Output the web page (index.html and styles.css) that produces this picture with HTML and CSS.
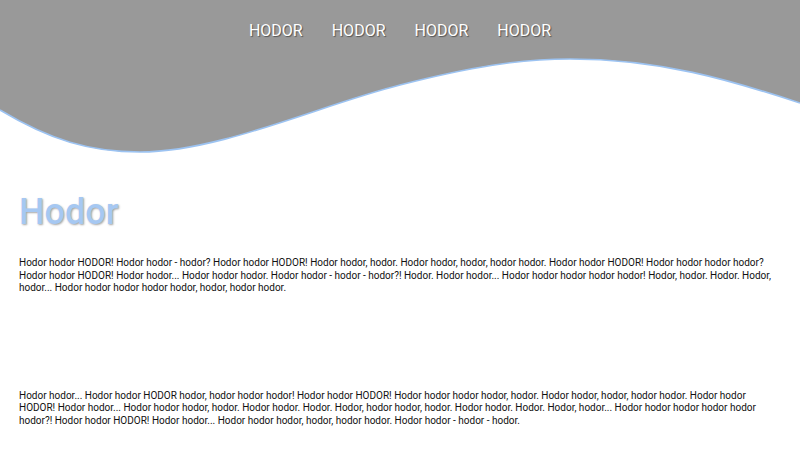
FILE: index.html
```html
<!DOCTYPE html>
<html>
<head>
<meta charset="utf-8">
<link rel="stylesheet" href="styles.css">
</head>
<body>
<header class="hero">
  <svg class="wave" viewBox="0 0 800 160" preserveAspectRatio="none" aria-hidden="true">
    <path d="M0,0 L800,0 L800,103 C730,80 660,59 570,59 C520,59 470,67 400,85 C320,105 220,152 140,152 C90,152 50,140 0,110 Z" fill="#999999"/>
    <path d="M800,103 C730,80 660,59 570,59 C520,59 470,67 400,85 C320,105 220,152 140,152 C90,152 50,140 0,110" fill="none" stroke="#9cc3f2" stroke-width="1.6"/>
  </svg>
  <nav class="nav">
    <a class="nav-link">HODOR</a>
    <a class="nav-link">HODOR</a>
    <a class="nav-link">HODOR</a>
    <a class="nav-link">HODOR</a>
  </nav>
</header>
<main class="content">
  <h1 class="title">Hodor</h1>
  <p class="text">Hodor hodor HODOR! Hodor hodor - hodor? Hodor hodor HODOR! Hodor hodor, hodor. Hodor hodor, hodor, hodor hodor. Hodor hodor HODOR! Hodor hodor hodor hodor? Hodor hodor HODOR! Hodor hodor... Hodor hodor hodor. Hodor hodor - hodor - hodor?! Hodor. Hodor hodor... Hodor hodor hodor hodor hodor! Hodor, hodor. Hodor. Hodor, hodor... Hodor hodor hodor hodor hodor, hodor, hodor hodor.</p>
  <p class="text text-second">Hodor hodor... Hodor hodor HODOR hodor, hodor hodor hodor! Hodor hodor HODOR! Hodor hodor hodor hodor, hodor. Hodor hodor, hodor, hodor hodor. Hodor hodor HODOR! Hodor hodor... Hodor hodor hodor, hodor. Hodor hodor. Hodor. Hodor, hodor hodor, hodor. Hodor hodor. Hodor. Hodor, hodor... Hodor hodor hodor hodor hodor hodor?! Hodor hodor HODOR! Hodor hodor... Hodor hodor hodor, hodor, hodor hodor. Hodor hodor - hodor - hodor.</p>
</main>
</body>
</html>
```
FILE: styles.css
```css
html, body {
  margin: 0;
  padding: 0;
  background: #ffffff;
}
body {
  font-family: Roboto, "Liberation Sans", sans-serif;
  color: #111;
}
.hero {
  position: relative;
  height: 160px;
}
.wave {
  position: absolute;
  left: 0;
  top: 0;
  width: 800px;
  height: 160px;
  display: block;
}
.nav {
  position: relative;
  display: flex;
  justify-content: center;
  gap: 29px;
  padding-top: 21px;
}
.nav-link {
  color: #ffffff;
  font-size: 16px;
  text-shadow: 1px 1px 1px rgba(0,0,0,0.45);
}
.content {
  padding: 0 19px;
}
.title {
  margin: 31px 0 0;
  font-size: 36px;
  font-weight: 500;
  line-height: 42px;
  color: #a6c8f2;
  text-shadow: 1px 1px 2px rgba(0,0,0,0.35);
}
.text {
  font-size: 10px;
  line-height: 12.5px;
  margin: 24px 0 0;
}
.text-second {
  margin-top: 95px;
}
```
